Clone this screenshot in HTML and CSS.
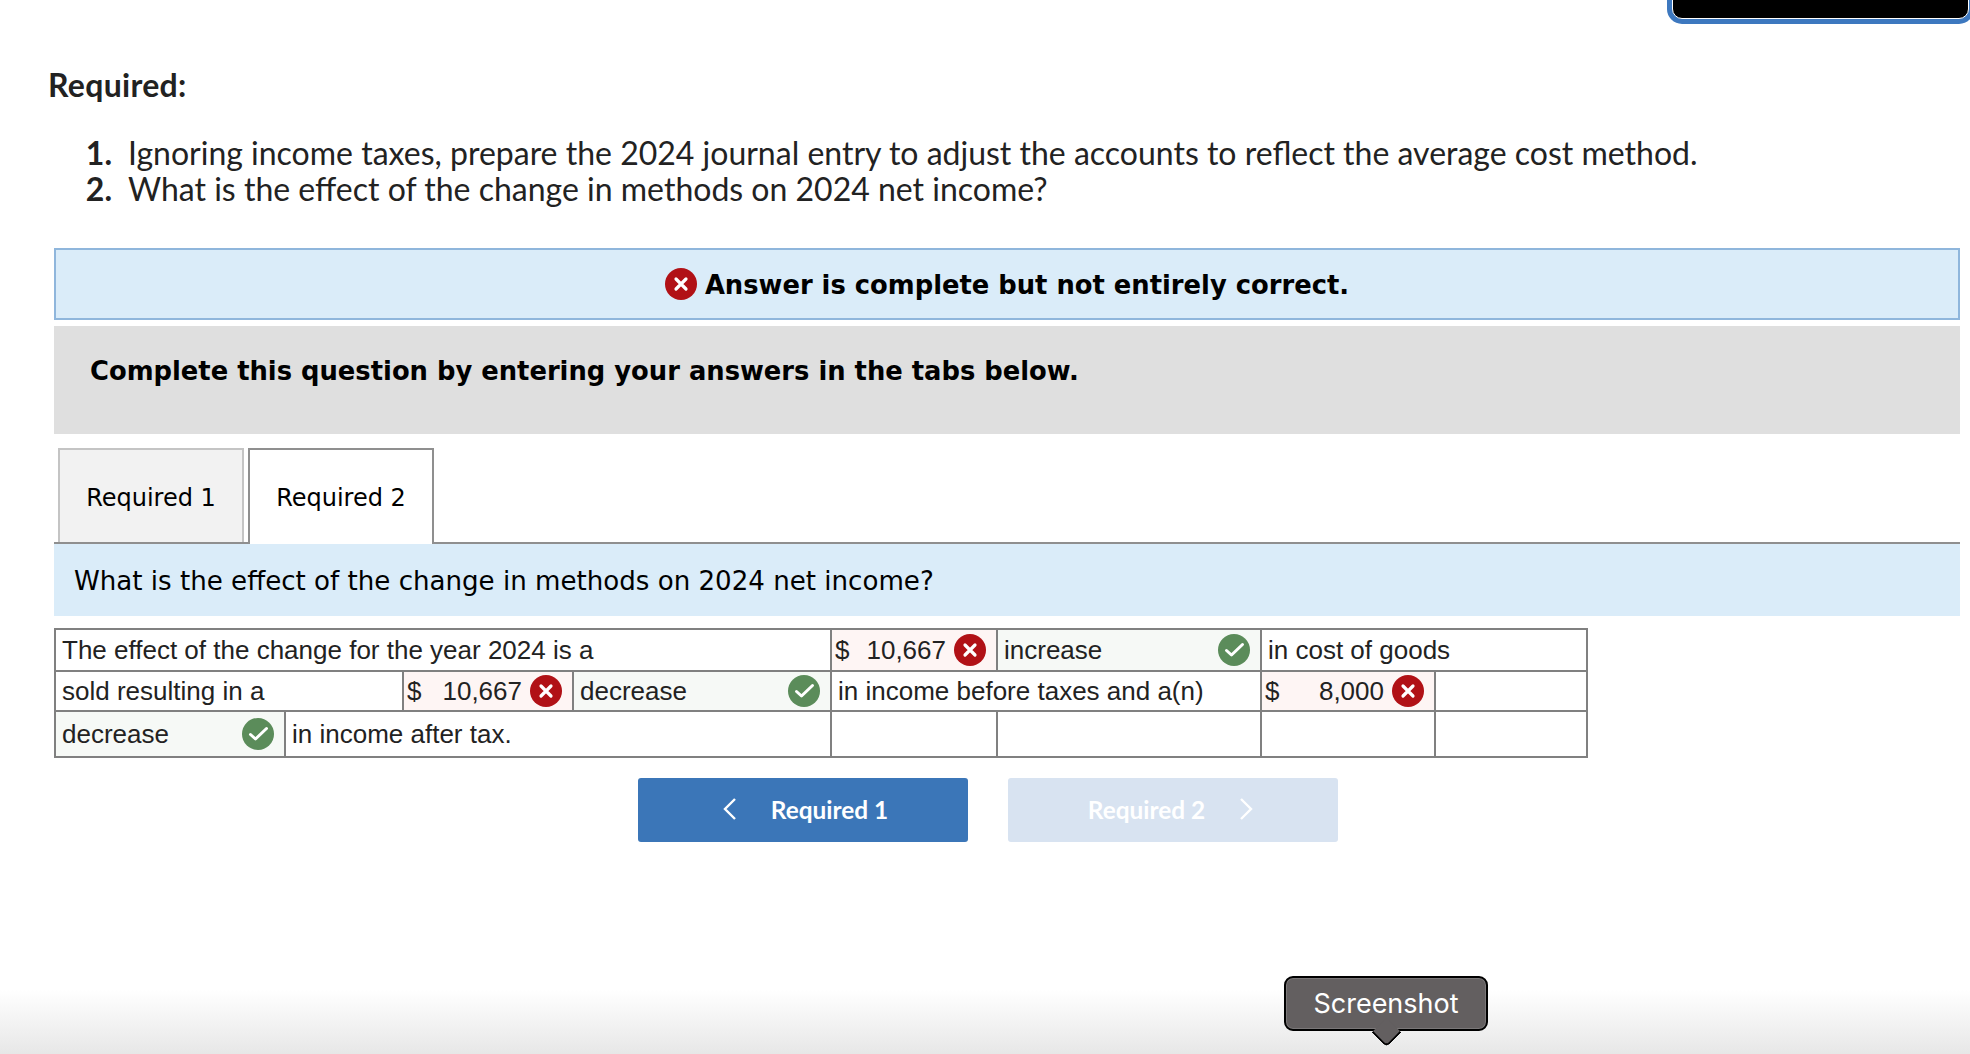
FILE: index.html

```html
<!DOCTYPE html>
<html lang="en">
<head>
    <meta charset="UTF-8">
    <title>Required</title>
    <link rel="stylesheet" href="styles.css">
</head>
<body>
    <div class="top-button"></div>

    <div class="intro">
        <h3>Required:</h3>
        <ol class="steps">
            <li><b>1.</b><span>Ignoring income taxes, prepare the 2024 journal entry to adjust the accounts to reflect the average cost method.</span></li>
            <li><b>2.</b><span>What is the effect of the change in methods on 2024 net income?</span></li>
        </ol>
    </div>

    <div class="panel">
        <div class="result">
            <svg class="icon" viewBox="0 0 32 32"><circle cx="16" cy="16" r="16" fill="#b11116"/><path d="M11 11l10 10M21 11L11 21" stroke="#fff" stroke-width="3.2" stroke-linecap="round"/></svg>
            <span>Answer is complete but not entirely correct.</span>
        </div>
        <div class="prompt">Complete this question by entering your answers in the tabs below.</div>

        <div class="tabs">
            <div class="tab">Required 1</div>
            <div class="tab active">Required 2</div>
        </div>
        <div class="question">What is the effect of the change in methods on 2024 net income?</div>

        <table class="answers">
            <colgroup>
                <col class="c1"><col class="c2"><col class="c3"><col class="c4">
                <col class="c5"><col class="c6"><col class="c7"><col class="c8">
            </colgroup>
            <tr class="r1">
                <td colspan="4">The effect of the change for the year 2024 is a</td>
                <td class="bad"><div class="cell"><span>$</span><span class="num">10,667</span><svg class="icon" viewBox="0 0 32 32"><circle cx="16" cy="16" r="16" fill="#b11116"/><path d="M11 11l10 10M21 11L11 21" stroke="#fff" stroke-width="3.2" stroke-linecap="round"/></svg></div></td>
                <td class="good"><div class="cell"><span class="word">increase</span><svg class="icon" viewBox="0 0 32 32"><circle cx="16" cy="16" r="16" fill="#5b8c5a"/><path d="M8.5 16.5l5 4.5 11-10.5" fill="none" stroke="#fff" stroke-width="3" stroke-linecap="round" stroke-linejoin="round"/></svg></div></td>
                <td colspan="2">in cost of goods</td>
            </tr>
            <tr class="r2">
                <td colspan="2">sold resulting in a</td>
                <td class="bad"><div class="cell"><span>$</span><span class="num">10,667</span><svg class="icon" viewBox="0 0 32 32"><circle cx="16" cy="16" r="16" fill="#b11116"/><path d="M11 11l10 10M21 11L11 21" stroke="#fff" stroke-width="3.2" stroke-linecap="round"/></svg></div></td>
                <td class="good"><div class="cell"><span class="word">decrease</span><svg class="icon" viewBox="0 0 32 32"><circle cx="16" cy="16" r="16" fill="#5b8c5a"/><path d="M8.5 16.5l5 4.5 11-10.5" fill="none" stroke="#fff" stroke-width="3" stroke-linecap="round" stroke-linejoin="round"/></svg></div></td>
                <td colspan="2">in income before taxes and a(n)</td>
                <td class="bad"><div class="cell"><span>$</span><span class="num">8,000</span><svg class="icon" viewBox="0 0 32 32"><circle cx="16" cy="16" r="16" fill="#b11116"/><path d="M11 11l10 10M21 11L11 21" stroke="#fff" stroke-width="3.2" stroke-linecap="round"/></svg></div></td>
                <td></td>
            </tr>
            <tr class="r3">
                <td class="good"><div class="cell"><span class="word">decrease</span><svg class="icon" viewBox="0 0 32 32"><circle cx="16" cy="16" r="16" fill="#5b8c5a"/><path d="M8.5 16.5l5 4.5 11-10.5" fill="none" stroke="#fff" stroke-width="3" stroke-linecap="round" stroke-linejoin="round"/></svg></div></td>
                <td colspan="3">in income after tax.</td>
                <td></td>
                <td></td>
                <td></td>
                <td></td>
            </tr>
        </table>

        <div class="nav">
            <button class="nav-btn prev">
                <svg class="chev" viewBox="0 0 14 24"><path d="M12 2L2 12l10 10" fill="none" stroke="#fff" stroke-width="2.4"/></svg>
                <span>Required 1</span>
            </button>
            <button class="nav-btn next">
                <span>Required 2</span>
                <svg class="chev" viewBox="0 0 14 24"><path d="M2 2l10 10L2 22" fill="none" stroke="#fff" stroke-width="2.4"/></svg>
            </button>
        </div>
    </div>

    <div class="dock-fade"></div>
    <div class="tooltip">Screenshot</div>
</body>
</html>
```

FILE: styles.css

```css
html, body {
    margin: 0;
    height: 1054px;
    overflow: hidden;
    background: #fff;
}
body {
    position: relative;
    font-family: "Liberation Sans", Arial, sans-serif;
    color: #222;
}
.top-button {
    position: absolute;
    top: -20px;
    right: 1px;
    width: 295px;
    height: 37px;
    background: #000;
    border: 1px solid #fff;
    border-radius: 10px;
    box-shadow: 0 0 0 5px #3d78bf;
}
.intro {
    padding: 66px 0 0 48px;
}
.intro h3 {
    margin: 0;
    font-family: Lato, sans-serif;
    font-size: 32px;
    font-weight: 700;
    letter-spacing: 0.3px;
    line-height: 38px;
}
.steps {
    list-style: none;
    margin: 31px 0 0;
    padding: 0;
    font-family: Lato, sans-serif;
    font-size: 32px;
    line-height: 36px;
}
.steps li {
    display: flex;
}
.steps b {
    width: 64px;
    text-align: right;
    margin-right: 16px;
}
.panel {
    margin: 41px 10px 0 54px;
}
.result {
    display: flex;
    align-items: center;
    justify-content: center;
    gap: 8px;
    height: 68px;
    background: #daecf9;
    border: 2px solid #8fb6dc;
    font-family: "DejaVu Sans", Verdana, sans-serif;
    font-size: 25.8px;
    font-weight: 700;
    color: #000;
}
.result span {
    padding-top: 2px;
}
.prompt {
    margin-top: 6px;
    height: 108px;
    padding: 28px 36px 0;
    box-sizing: border-box;
    background: #dfdfdf;
    font-family: "DejaVu Sans", Verdana, sans-serif;
    font-size: 25.8px;
    font-weight: 700;
    line-height: 34px;
    color: #000;
}
.tabs {
    display: flex;
    gap: 4px;
    margin-top: 14px;
    padding-left: 4px;
    border-bottom: 2px solid #8f8f8f;
}
.tab {
    width: 186px;
    height: 94px;
    box-sizing: border-box;
    border: 2px solid #c4c4c4;
    border-bottom: 0;
    background: #f2f2f2;
    font-family: "DejaVu Sans", Verdana, sans-serif;
    font-size: 24px;
    line-height: 96px;
    text-align: center;
    color: #000;
}
.tab.active {
    background: #fff;
    border-color: #8f8f8f;
    margin-bottom: -2px;
    height: 96px;
}
.question {
    height: 72px;
    padding-left: 20px;
    background: #daecf9;
    font-family: "DejaVu Sans", Verdana, sans-serif;
    font-size: 26.1px;
    line-height: 74px;
    color: #000;
}
.answers {
    margin-top: 12px;
    width: 1532px;
    table-layout: fixed;
    border-collapse: collapse;
    font-size: 26px;
}
.c1 { width: 230px; }
.c2 { width: 118px; }
.c3 { width: 170px; }
.c4 { width: 258px; }
.c5 { width: 166px; }
.c6 { width: 264px; }
.c7 { width: 174px; }
.c8 { width: 152px; }
.answers td {
    border: 2px solid #808080;
    padding: 0 6px;
    box-sizing: border-box;
    white-space: nowrap;
}
.r1 { height: 42px; }
.r2 { height: 40px; }
.r3 { height: 46px; }
.answers td.bad {
    background: #fef5f4;
    padding: 0 10px 0 3px;
}
.answers td.good {
    background: #f6f9f6;
    padding: 0 10px 0 6px;
}
.cell {
    display: flex;
    align-items: center;
}
.num {
    margin-left: auto;
    margin-right: 8px;
}
.word {
    margin-right: auto;
}
.icon {
    width: 32px;
    height: 32px;
    flex: none;
}
.nav {
    display: flex;
    gap: 40px;
    margin-top: 20px;
    padding-left: 584px;
}
.nav-btn {
    display: flex;
    align-items: center;
    justify-content: center;
    gap: 34px;
    width: 330px;
    height: 64px;
    padding: 0 0 2px;
    border: 0;
    border-radius: 3px;
    background: #3b76b8;
    color: #fff;
    font-family: Lato, sans-serif;
    font-size: 24.4px;
    font-weight: 700;
}
.nav-btn.prev {
    padding-left: 5px;
}
.nav-btn.next {
    padding-right: 5px;
    background: #d8e3f1;
}
.chev {
    width: 14px;
    height: 24px;
}
.dock-fade {
    position: absolute;
    left: 0;
    right: 0;
    bottom: 0;
    height: 64px;
    background: linear-gradient(#fff, #e7e7e7);
}
.tooltip {
    position: absolute;
    left: 1284px;
    top: 976px;
    width: 204px;
    height: 55px;
    box-sizing: border-box;
    background: #635f60;
    border: 2px solid #000;
    border-radius: 9px;
    box-shadow: inset 0 0 0 1px #7a7778;
    font-family: Inter, sans-serif;
    font-size: 27px;
    line-height: 52px;
    text-align: center;
    color: #fff;
}
.tooltip::after {
    content: "";
    position: absolute;
    left: 90px;
    bottom: -14px;
    width: 19px;
    height: 19px;
    background: #635f60;
    border: solid #000;
    border-width: 0 2px 2px 0;
    border-bottom-right-radius: 5px;
    transform: rotate(45deg);
}
```
